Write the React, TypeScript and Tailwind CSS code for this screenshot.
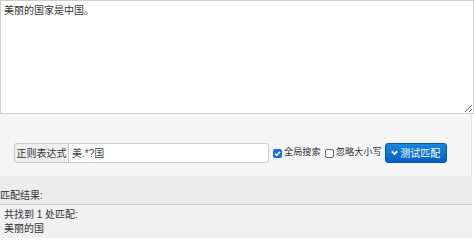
import React from "react";

export default function App() {
  return (
    <div
      className="w-[474px] h-[240px] bg-white text-[#333] overflow-hidden"
      style={{ fontFamily: '"Liberation Sans", "Noto Sans CJK SC", sans-serif' }}
    >
      <textarea
        readOnly
        defaultValue="美丽的国家是中国。"
        className="block w-[474px] h-[114px] border border-[#cfcfcf] bg-white px-[3px] pt-[3px] text-[10px] leading-[14px] text-[#333] outline-none resize-y"
        style={{ fontFamily: '"Liberation Sans", "Noto Sans CJK SC", sans-serif' }}
      />
      <div className="w-[472px] h-[62px] bg-[#f5f5f5] border-r border-[#e6e6e6] pt-[29px] pl-[14px] flex items-start">
        <div className="flex h-[20px]">
          <div className="h-[20px] w-[55px] flex items-center justify-center bg-[#eeeeee] border border-[#cccccc] rounded-l-[3px] text-[10px] text-[#333]">
            正则表达式
          </div>
          <div className="h-[20px] w-[200px] flex items-center bg-white border border-l-0 border-[#cccccc] rounded-r-[3px] pl-[3px] text-[10px] text-[#444]">
            美.*?国
          </div>
        </div>
        <div className="flex items-center h-[20px] ml-[4px] text-[9.2px] text-[#333]">
          <span className="w-[9px] h-[9px] rounded-[2px] bg-[#1a6fd8] flex items-center justify-center">
            <svg width="7" height="7" viewBox="0 0 10 10">
              <polyline points="1.5,5.2 4,7.6 8.6,2.4" fill="none" stroke="white" strokeWidth="2" />
            </svg>
          </span>
          <span className="ml-[2px]">全局搜索</span>
          <span className="ml-[4px] w-[9px] h-[9px] rounded-[2px] border border-[#666] bg-white" />
          <span className="ml-[2px]">忽略大小写</span>
        </div>
        <button className="ml-[3px] h-[20px] w-[62px] flex items-center justify-center gap-[2px] rounded-[3px] border border-[#0558b0] bg-gradient-to-b from-[#1c86dc] to-[#0560c4] text-white text-[10px]">
          <svg width="7" height="6" viewBox="0 0 10 8">
            <polyline points="1.2,1.5 5,5.5 8.8,1.5" fill="none" stroke="white" strokeWidth="2.6" />
          </svg>
          <span>测试匹配</span>
        </button>
      </div>
      <div className="w-[472px] h-[29px] bg-[#ececec] border-b border-[#cfcfcf] flex items-end pb-[2px] text-[10px] leading-[12px] text-[#333]">
        匹配结果:
      </div>
      <div className="w-[472px] h-[33px] bg-[#f0f0f0] pl-[4px] pt-[3px] text-[10px] leading-[14px] text-[#333]">
        <div>共找到 1 处匹配:</div>
        <div>美丽的国</div>
      </div>
    </div>
  );
}
